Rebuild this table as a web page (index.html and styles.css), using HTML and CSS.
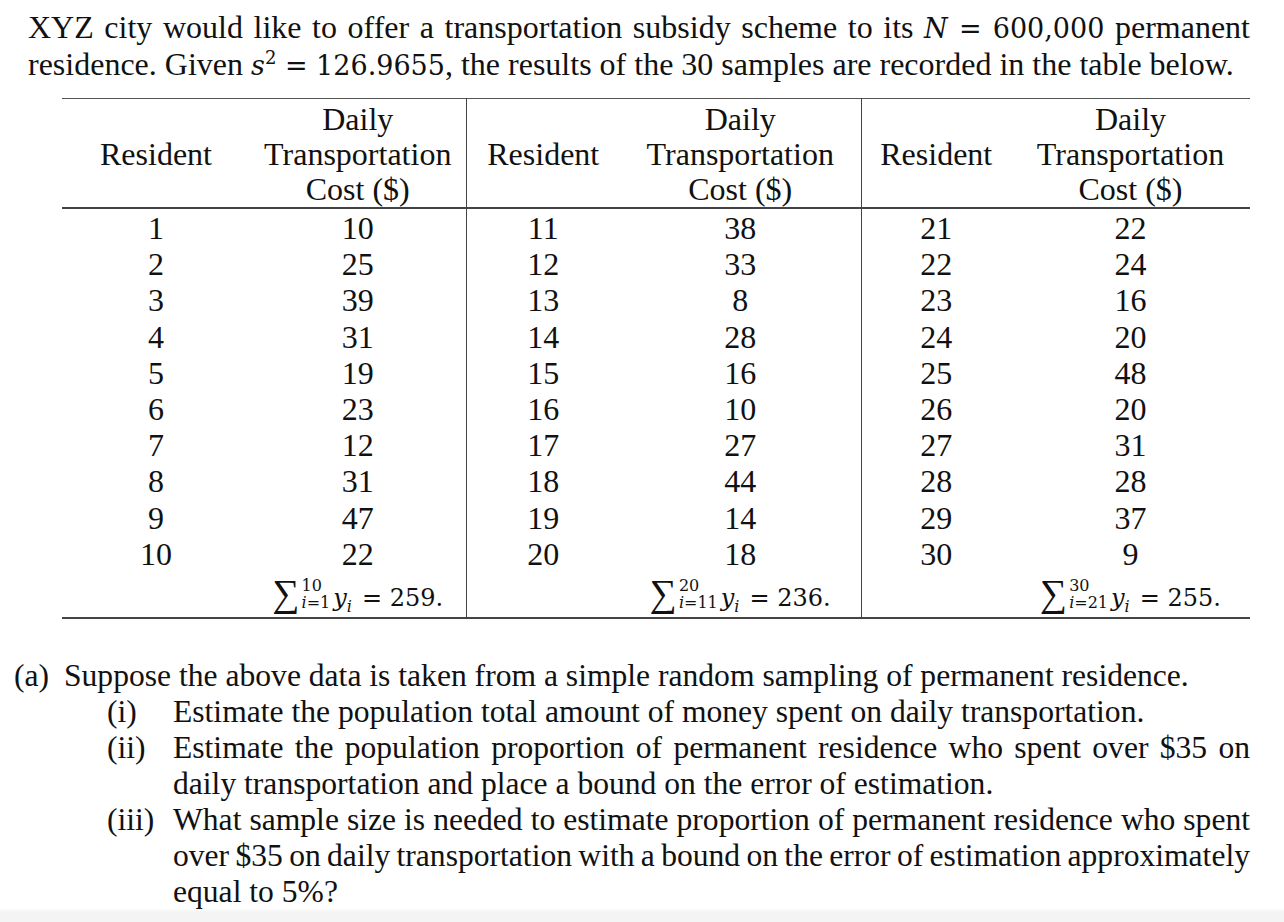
FILE: index.html
```html
<!DOCTYPE html>
<html lang="en">
<head>
<meta charset="utf-8">
<title>Transportation subsidy</title>
<link rel="stylesheet" href="styles.css">
</head>
<body>
<main class="page">
  <p class="intro">
    <span class="jl">XYZ city would like to offer a transportation subsidy scheme to its <span class="math"><i>N</i> = 600,000</span> permanent</span>
    <span class="ll">residence. Given <span class="math"><i>s</i><sup>2</sup> = 126.9655</span>, the results of the 30 samples are recorded in the table below.</span>
  </p>

  <table class="data">
    <colgroup>
      <col class="c-res1"><col class="c-cost1">
      <col class="c-res2"><col class="c-cost2">
      <col class="c-res3"><col class="c-cost3">
    </colgroup>
    <thead>
      <tr>
        <th>Resident</th><th>Daily<br>Transportation<br>Cost ($)</th>
        <th class="sep">Resident</th><th>Daily<br>Transportation<br>Cost ($)</th>
        <th class="sep">Resident</th><th>Daily<br>Transportation<br>Cost ($)</th>
      </tr>
    </thead>
    <tbody>
      <tr class="first"><td>1</td><td>10</td><td class="sep">11</td><td>38</td><td class="sep">21</td><td>22</td></tr>
      <tr><td>2</td><td>25</td><td class="sep">12</td><td>33</td><td class="sep">22</td><td>24</td></tr>
      <tr><td>3</td><td>39</td><td class="sep">13</td><td>8</td><td class="sep">23</td><td>16</td></tr>
      <tr><td>4</td><td>31</td><td class="sep">14</td><td>28</td><td class="sep">24</td><td>20</td></tr>
      <tr><td>5</td><td>19</td><td class="sep">15</td><td>16</td><td class="sep">25</td><td>48</td></tr>
      <tr><td>6</td><td>23</td><td class="sep">16</td><td>10</td><td class="sep">26</td><td>20</td></tr>
      <tr><td>7</td><td>12</td><td class="sep">17</td><td>27</td><td class="sep">27</td><td>31</td></tr>
      <tr><td>8</td><td>31</td><td class="sep">18</td><td>44</td><td class="sep">28</td><td>28</td></tr>
      <tr><td>9</td><td>47</td><td class="sep">19</td><td>14</td><td class="sep">29</td><td>37</td></tr>
      <tr><td>10</td><td>22</td><td class="sep">20</td><td>18</td><td class="sep">30</td><td>9</td></tr>
      <tr class="sums">
        <td></td>
        <td><span class="sum"><span class="sigma">∑</span><span class="lims"><span class="up">10</span><span class="lo"><i>i</i>=1</span></span><span class="yi"><i>y</i><span class="sb"><i>i</i></span></span><span class="eq">= 259.</span></span></td>
        <td class="sep"></td>
        <td><span class="sum"><span class="sigma">∑</span><span class="lims"><span class="up">20</span><span class="lo"><i>i</i>=11</span></span><span class="yi"><i>y</i><span class="sb"><i>i</i></span></span><span class="eq">= 236.</span></span></td>
        <td class="sep"></td>
        <td><span class="sum"><span class="sigma">∑</span><span class="lims"><span class="up">30</span><span class="lo"><i>i</i>=21</span></span><span class="yi"><i>y</i><span class="sb"><i>i</i></span></span><span class="eq">= 255.</span></span></td>
      </tr>
    </tbody>
  </table>

  <section class="parts">
    <div class="part"><span class="plabel">(a)</span><span class="ptext">Suppose the above data is taken from a simple random sampling of permanent residence.</span></div>
    <div class="sub"><span class="slabel">(i)</span><div class="stext"><span class="ll">Estimate the population total amount of money spent on daily transportation.</span></div></div>
    <div class="sub"><span class="slabel">(ii)</span><div class="stext"><span class="jl">Estimate the population proportion of permanent residence who spent over $35 on</span><span class="ll">daily transportation and place a bound on the error of estimation.</span></div></div>
    <div class="sub"><span class="slabel">(iii)</span><div class="stext"><span class="jl tight">What sample size is needed to estimate proportion of permanent residence who spent</span><span class="jl tight">over $35 on daily transportation with a bound on the error of estimation approximately</span><span class="ll">equal to 5%?</span></div></div>
  </section>
</main>
</body>
</html>
```
FILE: styles.css
```css
html, body {
  margin: 0;
  padding: 0;
}
body {
  width: 1284px;
  min-height: 922px;
  background: linear-gradient(to bottom, #ffffff 0, #ffffff 908px, #f4f4f4 912px, #f4f4f4 100%);
  color: #111;
  font-family: "Liberation Serif", "Times New Roman", serif;
  font-size: 32px;
}
.page {
  padding-top: 9px;
}
.intro {
  margin: 0 34px 0 28px;
  line-height: 37px;
}
.jl, .ll {
  display: block;
  white-space: nowrap;
}
.jl {
  text-align: justify;
  text-align-last: justify;
}
.math {
  font-family: "DejaVu Serif", serif;
  font-size: 27px;
  line-height: 1;
}
.math i {
  font-style: italic;
}
.math sup {
  font-size: 18px;
  vertical-align: 11px;
  line-height: 0;
}

/* table */
.data {
  margin: 15px 0 0 62px;
  border-collapse: collapse;
  table-layout: fixed;
  width: 1188px;
  border-top: 1.5px solid #555;
  border-bottom: 2px solid #444;
}
.c-res1 { width: 188px; }
.c-cost1 { width: 216px; }
.c-res2 { width: 154px; }
.c-cost2 { width: 241px; }
.c-res3 { width: 150px; }
.c-cost3 { width: 239px; }
.data th {
  font-weight: normal;
  line-height: 35px;
  padding: 3px 0 0 0;
  vertical-align: middle;
  text-align: center;
  border-bottom: 2px solid #444;
}
.data td {
  text-align: center;
  padding: 0;
  line-height: 36.2px;
  height: 36.2px;
}
.data .sep {
  border-left: 1.5px solid #444;
}
.data tr.first td {
  padding-top: 1px;
}
.data tr.sums td {
  height: 42px;
  line-height: normal;
  vertical-align: bottom;
  padding-bottom: 3px;
}
.sum {
  display: inline-flex;
  align-items: flex-end;
  height: 34px;
  font-family: "DejaVu Serif", serif;
  font-size: 24px;
  white-space: nowrap;
}
.sigma {
  font-family: "Liberation Serif", "DejaVu Serif", serif;
  font-size: 38px;
  line-height: 34px;
  height: 34px;
  margin-right: 2px;
  margin-bottom: 1px;
}
.lims {
  display: flex;
  flex-direction: column;
  font-size: 16px;
  line-height: 17px;
  text-align: left;
  margin-right: 3px;
}
.lims i, .yi i {
  font-style: italic;
}
.yi {
  display: flex;
  align-items: flex-end;
  line-height: 26px;
  margin-right: 10px;
}
.yi .sb {
  font-size: 16px;
  line-height: 14px;
  margin-bottom: -3px;
}
.eq {
  line-height: 26px;
}

/* parts */
.parts {
  margin-top: 39px;
  line-height: 36px;
  font-size: 31.6px;
}
.part {
  display: flex;
  padding-left: 14px;
}
.plabel {
  width: 50px;
  flex: none;
}
.sub {
  display: flex;
  padding-left: 107px;
  width: 1143px;
}
.slabel {
  width: 66px;
  flex: none;
}
.stext {
  flex: 1;
  min-width: 0;
}
.tight {
  word-spacing: -4px;
}
```
